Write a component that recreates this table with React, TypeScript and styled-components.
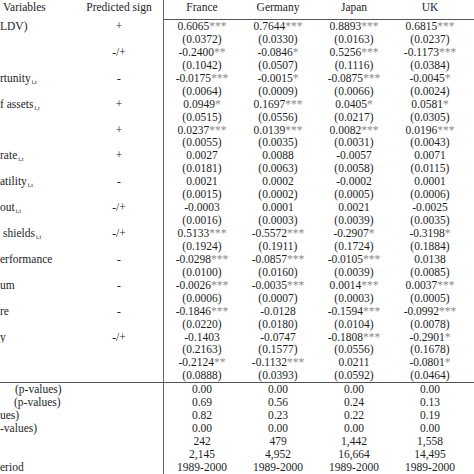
import React from "react";
import styled, { createGlobalStyle } from "styled-components";

const Global = createGlobalStyle`
  html, body { margin: 0; padding: 0; background: #ffffff; }
  body { font-family: "Liberation Serif", "Times New Roman", serif; color: #1e1e1e; }
`;

const COLS = "75px 88px 77px 76px 76px 76px 1fr";

const Table = styled.div`
  width: 474px;
  height: 474px;
  overflow: hidden;
  font-size: 11.5px;
  display: flex;
  flex-direction: column;
`;

const HeadRow = styled.div`
  display: grid;
  grid-template-columns: ${COLS};
  height: 20px;
  flex: none;
`;

const BodyRow = styled.div<{ $h: number }>`
  display: grid;
  grid-template-columns: ${COLS};
  height: ${(p) => p.$h}px;
  line-height: ${(p) => p.$h}px;
  flex: none;
`;

const HeadLabel = styled.div`
  padding-left: 3px;
  line-height: 15px;
  white-space: nowrap;
`;

const HeadSign = styled.div`
  text-align: center;
  line-height: 15px;
  white-space: nowrap;
`;

const HeadCountry = styled.div<{ $first?: boolean; $rule?: boolean }>`
  text-align: center;
  line-height: 15px;
  white-space: nowrap;
  border-bottom: ${(p) => (p.$rule ? "1px solid #555" : "none")};
  border-left: ${(p) => (p.$first ? "1px solid #666" : "none")};
`;

const Label = styled.div<{ $indent?: number }>`
  padding-left: ${(p) => p.$indent ?? 0}px;
  white-space: nowrap;
  overflow: hidden;
`;

const Sub = styled.span`
  font-size: 6.5px;
  position: relative;
  top: 2px;
  margin-left: 1px;
`;

const Sign = styled.div`
  text-align: center;
  white-space: nowrap;
`;

const Value = styled.div<{ $first?: boolean }>`
  text-align: center;
  white-space: nowrap;
  border-left: ${(p) => (p.$first ? "1px solid #666" : "none")};
`;

const Star = styled.span`
  color: #8a8a8a;
`;

const Rule = styled.div`
  height: 1px;
  background: #555;
  flex: none;
`;

const Filler = styled.div`
  flex: 1;
  display: grid;
  grid-template-columns: ${COLS};
`;

type Var = { label: string; sub?: boolean; indent?: number; sign: string };

const vars: Var[] = [
  { label: "LDV)", sign: "+" },
  { label: "", sign: "-/+" },
  { label: "rtunity", sub: true, sign: "-" },
  { label: "f assets", sub: true, sign: "+" },
  { label: "", sign: "+" },
  { label: "rate", sub: true, sign: "+" },
  { label: "atility", sub: true, sign: "-" },
  { label: "out", sub: true, sign: "-/+" },
  { label: "shields", sub: true, indent: 3, sign: "-/+" },
  { label: "erformance", sign: "-" },
  { label: "um", sign: "-" },
  { label: "re", sign: "-" },
  { label: "y", sign: "-/+" },
  { label: "", sign: "" },
];

const data: string[][] = [
  ["0.6065***", "(0.0372)", "-0.2400**", "(0.1042)", "-0.0175***", "(0.0064)", "0.0949*", "(0.0515)", "0.0237***", "(0.0055)", "0.0027", "(0.0181)", "0.0021", "(0.0015)", "-0.0003", "(0.0016)", "0.5133***", "(0.1924)", "-0.0298***", "(0.0100)", "-0.0026***", "(0.0006)", "-0.1846***", "(0.0220)", "-0.1403", "(0.2163)", "-0.2124**", "(0.0888)"],
  ["0.7644***", "(0.0330)", "-0.0846*", "(0.0507)", "-0.0015*", "(0.0009)", "0.1697***", "(0.0556)", "0.0139***", "(0.0035)", "0.0088", "(0.0063)", "0.0002", "(0.0002)", "0.0001", "(0.0003)", "-0.5572***", "(0.1911)", "-0.0857***", "(0.0160)", "-0.0035***", "(0.0007)", "-0.0128", "(0.0180)", "-0.0747", "(0.1577)", "-0.1132***", "(0.0393)"],
  ["0.8893***", "(0.0163)", "0.5256***", "(0.1116)", "-0.0875***", "(0.0066)", "0.0405*", "(0.0217)", "0.0082***", "(0.0031)", "-0.0057", "(0.0058)", "-0.0002", "(0.0005)", "0.0021", "(0.0039)", "-0.2907*", "(0.1724)", "-0.0105***", "(0.0039)", "0.0014***", "(0.0003)", "-0.1594***", "(0.0104)", "-0.1808***", "(0.0556)", "0.0211", "(0.0592)"],
  ["0.6815***", "(0.0237)", "-0.1173***", "(0.0384)", "-0.0045*", "(0.0024)", "0.0581*", "(0.0305)", "0.0196***", "(0.0043)", "0.0071", "(0.0115)", "0.0001", "(0.0006)", "-0.0025", "(0.0035)", "-0.3198*", "(0.1884)", "0.0138", "(0.0085)", "0.0037***", "(0.0005)", "-0.0992***", "(0.0078)", "-0.2901*", "(0.1678)", "-0.0801*", "(0.0464)"],
];

const summary: { label: string; indent?: number; values: string[] }[] = [
  { label: "(p-values)", indent: 15, values: ["0.00", "0.00", "0.00", "0.00"] },
  { label: "(p-values)", indent: 14, values: ["0.69", "0.56", "0.24", "0.13"] },
  { label: "ues)", values: ["0.82", "0.23", "0.22", "0.19"] },
  { label: "-values)", values: ["0.00", "0.00", "0.00", "0.00"] },
  { label: "", values: ["242", "479", "1,442", "1,558"] },
  { label: "", values: ["2,145", "4,952", "16,664", "14,495"] },
  { label: "eriod", values: ["1989-2000", "1989-2000", "1989-2000", "1989-2000"] },
];

const countries = ["France", "Germany", "Japan", "UK"];

function Num({ v }: { v: string }) {
  const m = v.match(/^([^*]*)(\**)$/);
  const base = m ? m[1] : v;
  const stars = m ? m[2] : "";
  return (
    <>
      {base}
      {stars && <Star>{stars}</Star>}
    </>
  );
}

const ROW_H = 12.95;

export default function App() {
  const bodyRows: React.ReactNode[] = [];
  for (let r = 0; r < 28; r++) {
    const v = vars[Math.floor(r / 2)];
    const isCoef = r % 2 === 0;
    bodyRows.push(
      <BodyRow key={r} $h={ROW_H}>
        <Label $indent={v.indent}>
          {isCoef && v.label}
          {isCoef && v.sub && <Sub>i,t</Sub>}
        </Label>
        <Sign>{isCoef ? v.sign : ""}</Sign>
        {data.map((col, c) => (
          <Value key={c} $first={c === 0}>
            <Num v={col[r]} />
          </Value>
        ))}
        <div />
      </BodyRow>
    );
  }

  return (
    <>
      <Global />
      <Table>
        <HeadRow>
          <HeadLabel>Variables</HeadLabel>
          <HeadSign>Predicted sign</HeadSign>
          {countries.map((c, i) => (
            <HeadCountry key={c} $first={i === 0} $rule>
              {c}
            </HeadCountry>
          ))}
          <HeadCountry $rule />
        </HeadRow>
        {bodyRows}
        <Rule />
        {summary.map((s, i) => (
          <BodyRow key={i} $h={13}>
            <Label $indent={s.indent}>{s.label}</Label>
            <Sign />
            {s.values.map((v, c) => (
              <Value key={c} $first={c === 0}>
                {v}
              </Value>
            ))}
            <div />
          </BodyRow>
        ))}
        <Filler>
          <div />
          <div />
          <Value $first />
        </Filler>
      </Table>
    </>
  );
}
